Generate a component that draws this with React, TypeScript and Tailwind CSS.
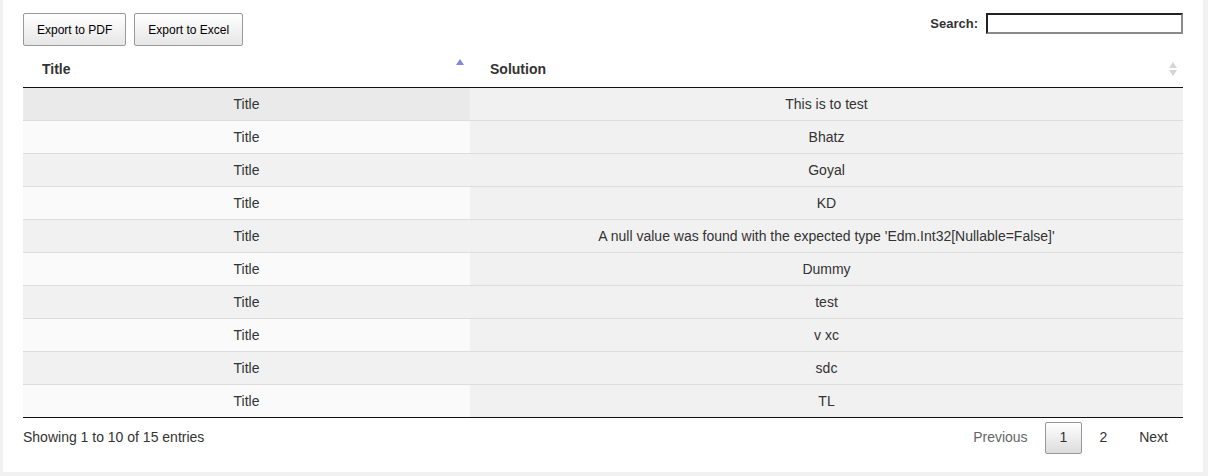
import React from "react";

const ROWS = [
  "This is to test",
  "Bhatz",
  "Goyal",
  "KD",
  "A null value was found with the expected type 'Edm.Int32[Nullable=False]'",
  "Dummy",
  "test",
  "v xc",
  "sdc",
  "TL",
];

function SortAsc() {
  return (
    <svg width="10" height="16" viewBox="0 0 10 16" aria-hidden="true">
      <path d="M1 7 L5 1 L9 7 Z" fill="#8286dc" />
    </svg>
  );
}

function SortBoth() {
  return (
    <svg width="10" height="16" viewBox="0 0 10 16" aria-hidden="true">
      <path d="M1 7 L5 1 L9 7 Z" fill="#d6d6d6" />
      <path d="M1 9 L9 9 L5 15 Z" fill="#d6d6d6" />
    </svg>
  );
}

function ExportButton({ label }: { label: string }) {
  return (
    <button
      type="button"
      className="h-[33px] rounded-[2px] border border-[#999] bg-gradient-to-b from-white to-[#e6e6e6] px-[13px] text-[12px] text-black"
    >
      {label}
    </button>
  );
}

export default function App() {
  return (
    <div
      className="h-[476px] bg-[#f1f1f1] pl-[3px] pr-[5px] pb-[4px] text-[#333]"
      style={{ fontFamily: '"Liberation Sans", Arial, sans-serif' }}
    >
      <div className="h-[472px] bg-white px-5 pt-[13px]">
        <div className="flex items-start justify-between">
          <div className="flex gap-2">
            <ExportButton label="Export to PDF" />
            <ExportButton label="Export to Excel" />
          </div>
          <label className="flex items-center gap-2 text-[13px] font-bold">
            Search:
            <input
              type="text"
              className="h-[21px] w-[197px] border-2 border-[#8a8a8a] border-t-[#222] border-l-[#222] bg-white px-1 text-[13px] outline-none"
            />
          </label>
        </div>

        <table className="mt-[6px] w-full border-collapse text-[14px]">
          <thead>
            <tr className="border-b border-[#111]">
              <th className="h-[35px] w-[447px] p-0 text-left font-bold">
                <div className="flex items-center justify-between pl-[19px] pr-[5px]">
                  <span>Title</span>
                  <span className="-mt-[6px]">
                    <SortAsc />
                  </span>
                </div>
              </th>
              <th className="h-[35px] p-0 text-left font-bold">
                <div className="flex items-center justify-between pl-[20px] pr-[5px]">
                  <span>Solution</span>
                  <span className="-mt-[1px]">
                    <SortBoth />
                  </span>
                </div>
              </th>
            </tr>
          </thead>
          <tbody className="border-b border-[#111]">
            {ROWS.map((sol, i) => (
              <tr key={i} className={i === 0 ? "" : "border-t border-[#ddd]"}>
                <td
                  className={
                    "h-[33px] p-0 pt-px text-center " +
                    (i === 0 ? "bg-[#eaeaea]" : i % 2 === 0 ? "bg-[#f1f1f1]" : "bg-[#fafafa]")
                  }
                >
                  Title
                </td>
                <td className="h-[33px] bg-[#f1f1f1] p-0 pt-px text-center">{sol}</td>
              </tr>
            ))}
          </tbody>
        </table>

        <div className="flex items-start justify-between text-[14px]">
          <div className="pt-[9px] leading-[20px]">Showing 1 to 10 of 15 entries</div>
          <div className="mt-[4px] flex">
            <span className="ml-[2px] flex h-[32px] items-center border border-transparent px-[14px] text-[#666]">
              Previous
            </span>
            <span className="ml-[2px] flex h-[32px] min-w-[37px] items-center justify-center rounded-[2px] border border-[#979797] bg-gradient-to-b from-white to-[#dcdcdc] px-[14px]">
              1
            </span>
            <span className="ml-[2px] flex h-[32px] items-center border border-transparent px-[14px]">
              2
            </span>
            <span className="ml-[2px] flex h-[32px] items-center border border-transparent px-[14px]">
              Next
            </span>
          </div>
        </div>
      </div>
    </div>
  );
}
